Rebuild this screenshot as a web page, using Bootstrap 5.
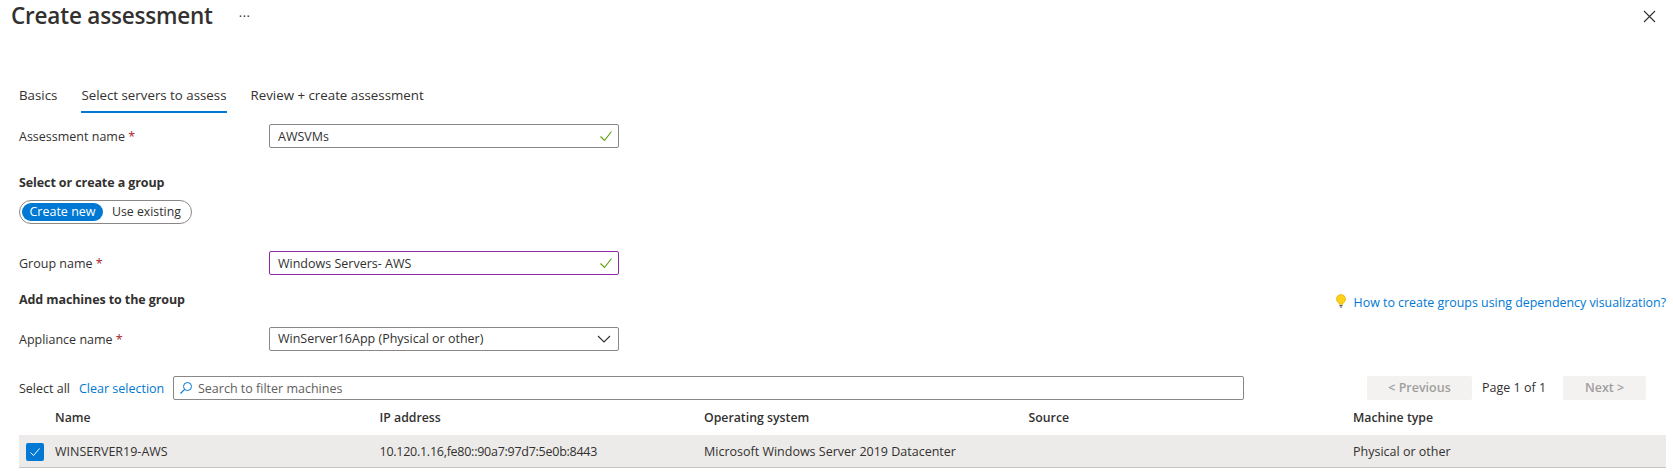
<!DOCTYPE html>
<html lang="en">
<head>
<meta charset="utf-8">
<title>Create assessment</title>
<link href="https://cdn.jsdelivr.net/npm/bootstrap@5.3.0/dist/css/bootstrap.min.css" rel="stylesheet">
<style>
html,body{height:475px;overflow:hidden;background:#fff}
body{font-family:"Open Sans","Noto Sans",sans-serif;font-size:12.5px;color:#323130;line-height:16px;padding:0 7px 0 19px}
.top-bar{height:32px;margin-left:-8px}
.page-title{font-family:"Open Sans",sans-serif;font-size:22.5px;font-weight:600;line-height:30px;margin:0;color:#323130;letter-spacing:-.2px}
.more-dots{margin-left:26px;font-size:13px;line-height:26px;letter-spacing:.5px}
.close-x{background:none;border:0;padding:0;margin-right:10px;line-height:0}
.tab-strip{margin-top:53px;gap:24px}
.tab-item{color:#323130;font-size:13.3px;padding:2px 0 8px;line-height:16px;border-bottom:2px solid transparent;height:28px}
.tab-item:hover{color:#323130}
.tab-item.is-on{border-bottom-color:#0078d4}
.form-line{height:24px}
.line-label{width:250px;flex:none;padding-top:1px}
.req{color:#a4262c}
.field-box{width:350px;height:24px;position:relative}
.field-input{height:24px;min-height:24px;padding:0 24px 0 8px;font-size:12.5px;line-height:22px;color:#323130;border:1px solid #8a8886;border-radius:2px;background-image:none}
.field-input:focus{box-shadow:none;border-color:#8a8886}
.field-active{border-color:#8e2aa8}
.field-active:focus{border-color:#8e2aa8}
.field-mark{position:absolute;right:6px;top:5px}
.sect-title{font-weight:700;line-height:16px;color:#323130;letter-spacing:-.1px}
.pill-group{width:173px;height:24px;border:1px solid #8a8886;border-radius:12px;padding:2px;margin-top:9px}
.pill-on{background:#0078d4;color:#fff;border:0;border-radius:10px;height:18px;width:81px;padding:0;font-size:12.5px;line-height:18px}
.pill-off{background:none;color:#323130;border:0;height:18px;padding:0;margin-left:9px;font-size:12.3px;line-height:18px}
.az-link{color:#0078d4;text-decoration:none}
.hint-link{gap:8px;padding-top:3px;align-self:flex-start;font-size:12.4px}
.bulb-mark{margin-top:-4px}
.filter-row{height:24px;margin-top:25px}
.filter-left{width:154px;flex:none;gap:9px;padding-top:1px}
.search-wrap{width:1071px;height:24px;position:relative;flex:none}
.search-wrap .field-input{padding-left:24px}
.search-wrap .field-input::placeholder{color:#605e5c;opacity:1}
.search-mark{position:absolute;left:6px;top:5px}
.pager{margin-left:123px;flex:none}
.pager-btn{background:#f3f2f1;color:#a19f9d;border:0;border-radius:2px;height:24px;font-size:12.5px;font-weight:600;padding:0}
.pager-prev{width:105px}
.pager-next{width:83px}
.pager-text{width:91px;padding-left:10px}
.vm-table{margin:7px 0 0;width:1647px;table-layout:fixed;color:#323130;--bs-table-color:#323130}
.vm-table>thead>tr>th{height:28px;padding:0 0 6px;font-weight:600;font-size:12.3px;border:0;vertical-align:middle;line-height:16px}
.vm-table>tbody>tr>td{height:32px;padding:2px 0 0;background:#edebe9;border:0;border-bottom:1px solid #c8c6c4;vertical-align:middle;box-shadow:none}
.cell-check{width:36px}
.tick-box{width:18px;height:18px;background:#0078d4;border-radius:2px;margin-left:7px}
.col-wide{width:324.5px}
.ip-text{letter-spacing:-.26px}
</style>
</head>
<body>
<div class="top-bar d-flex align-items-center">
  <h1 class="page-title">Create assessment</h1>
  <span class="more-dots">···</span>
  <button class="close-x ms-auto" aria-label="Close"><svg width="13" height="13" viewBox="0 0 13 13"><path d="M1 1l11 11M12 1L1 12" stroke="#323130" stroke-width="1.1" fill="none"/></svg></button>
</div>

<nav class="nav tab-strip">
  <a class="nav-link tab-item" href="#">Basics</a>
  <a class="nav-link tab-item is-on" href="#">Select servers to assess</a>
  <a class="nav-link tab-item" href="#">Review + create assessment</a>
</nav>

<div class="form-line d-flex align-items-center" style="margin-top:11px">
  <label class="line-label">Assessment name <span class="req">*</span></label>
  <div class="field-box">
    <input class="form-control field-input" value="AWSVMs">
    <svg class="field-mark" width="14" height="14" viewBox="0 0 14 14"><path d="M1.5 7.5l4 4 7-9" stroke="#57a300" stroke-width="1.1" fill="none"/></svg>
  </div>
</div>

<div class="sect-title" style="margin-top:27px">Select or create a group</div>
<div class="pill-group d-flex align-items-center">
  <button class="pill-on">Create new</button>
  <button class="pill-off">Use existing</button>
</div>

<div class="form-line d-flex align-items-center" style="margin-top:27px">
  <label class="line-label">Group name <span class="req">*</span></label>
  <div class="field-box">
    <input class="form-control field-input field-active" value="Windows Servers- AWS">
    <svg class="field-mark" width="14" height="14" viewBox="0 0 14 14"><path d="M1.5 7.5l4 4 7-9" stroke="#57a300" stroke-width="1.1" fill="none"/></svg>
  </div>
</div>

<div class="d-flex justify-content-between align-items-center" style="margin-top:17px;height:16px">
  <div class="sect-title">Add machines to the group</div>
  <a class="az-link hint-link d-flex align-items-center" href="#">
    <svg class="bulb-mark" width="10" height="15" viewBox="0 0 10 15"><path d="M5 .5a4.5 4.5 0 0 0-2.6 8.2c.5.4.8 1 .8 1.6h3.6c0-.6.3-1.2.8-1.6A4.5 4.5 0 0 0 5 .5z" fill="#fcd116" stroke="#eaa300" stroke-width=".6"/><path d="M3.4 11.5h3.2M3.8 13h2.4" stroke="#605e5c" stroke-width="1"/></svg>
    <span>How to create groups using dependency visualization?</span>
  </a>
</div>

<div class="form-line d-flex align-items-center" style="margin-top:19px">
  <label class="line-label">Appliance name <span class="req">*</span></label>
  <div class="field-box">
    <select class="form-select field-input"><option>WinServer16App (Physical or other)</option></select>
    <svg class="field-mark" style="right:8px;top:6px" width="14" height="12" viewBox="0 0 14 12"><path d="M1 3l6 6 6-6" stroke="#323130" stroke-width="1.1" fill="none"/></svg>
  </div>
</div>

<div class="filter-row d-flex align-items-center">
  <div class="filter-left d-flex">
    <span>Select all</span>
    <a class="az-link" href="#">Clear selection</a>
  </div>
  <div class="search-wrap">
    <input class="form-control field-input" placeholder="Search to filter machines">
    <svg class="search-mark" width="14" height="14" viewBox="0 0 14 14"><circle cx="8.5" cy="5.5" r="4" stroke="#0078d4" stroke-width="1" fill="none"/><path d="M5.6 8.4L1.5 12.5" stroke="#0078d4" stroke-width="1.1"/></svg>
  </div>
  <div class="pager d-flex align-items-center">
    <button class="pager-btn pager-prev" disabled>&lt; Previous</button>
    <span class="pager-text">Page 1 of 1</span>
    <button class="pager-btn pager-next" disabled>Next &gt;</button>
  </div>
</div>

<table class="table vm-table">
  <thead>
    <tr>
      <th class="cell-check"></th>
      <th class="col-wide">Name</th>
      <th class="col-wide">IP address</th>
      <th class="col-wide">Operating system</th>
      <th class="col-wide">Source</th>
      <th>Machine type</th>
    </tr>
  </thead>
  <tbody>
    <tr>
      <td><div class="tick-box d-flex align-items-center justify-content-center"><svg width="12" height="12" viewBox="0 0 12 12"><path d="M1.5 6.5l3 3 6-7" stroke="#fff" stroke-width="1" fill="none"/></svg></div></td>
      <td>WINSERVER19-AWS</td>
      <td class="ip-text">10.120.1.16,fe80::90a7:97d7:5e0b:8443</td>
      <td>Microsoft Windows Server 2019 Datacenter</td>
      <td></td>
      <td>Physical or other</td>
    </tr>
  </tbody>
</table>
<script src="https://cdn.jsdelivr.net/npm/bootstrap@5.3.0/dist/js/bootstrap.bundle.min.js"></script>
</body>
</html>
